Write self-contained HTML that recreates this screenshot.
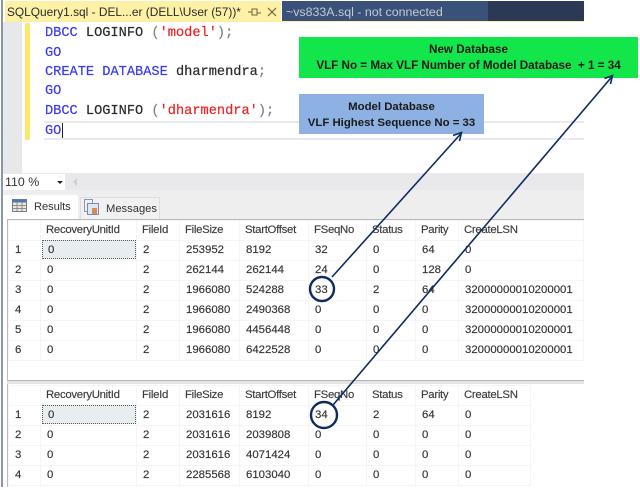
<!DOCTYPE html>
<html><head><meta charset="utf-8">
<style>
html,body{margin:0;padding:0;background:#fff;width:640px;height:490px;overflow:hidden}
#w{position:relative;width:640px;height:490px;overflow:hidden;filter:blur(.35px);font-family:"Liberation Sans",sans-serif}
.a{position:absolute}
.c{position:absolute;left:45px;font:13.65px/20px "Liberation Mono",monospace;color:#2a2a2a;white-space:pre;-webkit-text-stroke:.2px}
.k{color:#3a3af0}.s{color:#f02020}.g{color:#808080}
table{position:absolute;left:8px;border-collapse:collapse;table-layout:fixed;font-size:11.4px;color:#333;-webkit-text-stroke:.15px}
td{padding:0 0 0 6px;border:1px solid #f5f5f5;white-space:nowrap;overflow:hidden;box-sizing:border-box;height:20px;line-height:19px}
tr.h td{letter-spacing:-.3px;padding-left:5px;color:#3c3c3c}
.bx{position:absolute;text-align:center;font-weight:bold;line-height:16px;color:#1a1a1a;white-space:pre}
.sel{position:absolute;left:42px;width:94px;height:19px;box-sizing:border-box;border:1px dotted #555;background:#e8edf0;font-size:11.4px;line-height:18px;padding-left:5px;color:#333;-webkit-text-stroke:.15px}
</style></head><body><div id="w">

<!-- left strip -->
<div class="a" style="left:1px;top:0;width:2px;height:487px;background:#8c96aa"></div>
<div class="a" style="left:3px;top:22px;width:19px;height:151px;background:#e7e8ea"></div>
<div class="a" style="left:7px;top:219px;width:1px;height:268px;background:#b8b8b8"></div>

<!-- tab bar -->
<div class="a" style="left:5px;top:1px;width:276px;height:21px;background:#fdf1a6"></div>
<div class="a" style="left:7px;top:3px;font-size:11.9px;line-height:19px;color:#2a2a2a;white-space:pre">SQLQuery1.sql - DEL...er (DELL\User (57))*</div>
<svg class="a" style="left:245px;top:6px" width="32" height="12"><path d="M3 6h4M7 3v6h5V3zM12 7h4" fill="none" stroke="#6b6240" stroke-width="1"/><path d="M23 2l8 8M31 2l-8 8" stroke="#6b6240" stroke-width="1.2"/></svg>
<div class="a" style="left:282px;top:1px;width:206px;height:20px;background:#3a5279"></div>
<div class="a" style="left:488px;top:1px;width:96px;height:20px;background:#2b3957"></div>
<div class="a" style="left:286px;top:3px;font-size:12.4px;line-height:19px;color:#c3cad4;white-space:pre">~vs833A.sql - not connected</div>
<div class="a" style="left:5px;top:21px;width:579px;height:1px;background:#fbeea0"></div>

<!-- editor -->
<div class="a" style="left:25px;top:23px;width:5px;height:117px;background:#fbe769"></div>
<div class="a" style="left:44px;top:121px;width:540px;height:2px;background:#e9e9f3"></div>
<div class="a" style="left:44px;top:138px;width:540px;height:2px;background:#e9e9f3"></div>
<div class="c" style="top:24px"><span class="k">DBCC</span> LOGINFO <span class="g">(</span><span class="s">'model'</span><span class="g">);</span></div>
<div class="c" style="top:44px"><span class="k">GO</span></div>
<div class="c" style="top:63px"><span class="k">CREATE DATABASE</span> dharmendra<span class="g">;</span></div>
<div class="c" style="top:82px"><span class="k">GO</span></div>
<div class="c" style="top:102px"><span class="k">DBCC</span> LOGINFO <span class="g">(</span><span class="s">'dharmendra'</span><span class="g">);</span></div>
<div class="c" style="top:122px"><span class="k">GO</span></div>
<div class="a" style="left:62px;top:123px;width:1px;height:15px;background:#222"></div>

<!-- zoom bar + tabs -->
<div class="a" style="left:3px;top:173px;width:581px;height:17px;background:#e9e9eb"></div>
<div class="a" style="left:3px;top:190px;width:581px;height:29px;background:#eeeeef"></div>
<div class="a" style="left:3px;top:174px;width:62px;height:16px;background:#fff;font-size:12.4px;line-height:17px;color:#333;text-indent:2px">110 %</div>
<svg class="a" style="left:56px;top:180px" width="8" height="5"><path d="M1 1h6L4 4z" fill="#222"/></svg>
<svg class="a" style="left:71px;top:177px" width="7" height="10"><path d="M6 1L2 5l4 4z" fill="#cfd0d3"/></svg>
<div class="a" style="left:3px;top:195px;width:75px;height:24px;background:#fff"></div>
<div class="a" style="left:80px;top:197px;width:80px;height:22px;background:#f1f1f2;border:1px solid #dedede;border-bottom:0;box-sizing:border-box"></div>
<svg class="a" style="left:12px;top:199px" width="15" height="13"><rect x=".5" y=".5" width="14" height="12" fill="#f3e6cf" stroke="#6d7f9c"/><rect x=".5" y=".5" width="14" height="3" fill="#4f76b5"/><path d="M5 3v9M10 3v9M1 6.5h13M1 9.5h13" stroke="#8a8f9a"/></svg>
<svg class="a" style="left:84px;top:199px" width="16" height="17"><rect x=".5" y=".5" width="8" height="12" fill="#eef1f6" stroke="#8b97aa"/><rect x="3.5" y="4.5" width="11" height="11" fill="#dfe7f3" stroke="#7d8ca5"/><rect x="8" y="9" width="5" height="6" fill="#d98a5a"/></svg>
<div class="a" style="left:34px;top:199px;font-size:11.2px;line-height:16px;color:#333;letter-spacing:-.1px">Results</div>
<div class="a" style="left:106px;top:201px;font-size:11.2px;line-height:16px;color:#333">Messages</div>
<div class="a" style="left:7px;top:219px;width:577px;height:1px;background:#b9b9bb"></div>

<!-- table 1 -->
<table style="top:220px;width:575px">
<colgroup><col style="width:32px"><col style="width:96px"><col style="width:43px"><col style="width:60px"><col style="width:69px"><col style="width:58px"><col style="width:49px"><col style="width:43px"><col style="width:125px"></colgroup>
<tr class="h"><td></td><td>RecoveryUnitId</td><td>FileId</td><td>FileSize</td><td>StartOffset</td><td>FSeqNo</td><td>Status</td><td>Parity</td><td>CreateLSN</td></tr>
<tr><td>1</td><td></td><td>2</td><td>253952</td><td>8192</td><td>32</td><td>0</td><td>64</td><td>0</td></tr>
<tr><td>2</td><td>0</td><td>2</td><td>262144</td><td>262144</td><td>24</td><td>0</td><td>128</td><td>0</td></tr>
<tr><td>3</td><td>0</td><td>2</td><td>1966080</td><td>524288</td><td>33</td><td>2</td><td>64</td><td>32000000010200001</td></tr>
<tr><td>4</td><td>0</td><td>2</td><td>1966080</td><td>2490368</td><td>0</td><td>0</td><td>0</td><td>32000000010200001</td></tr>
<tr><td>5</td><td>0</td><td>2</td><td>1966080</td><td>4456448</td><td>0</td><td>0</td><td>0</td><td>32000000010200001</td></tr>
<tr><td>6</td><td>0</td><td>2</td><td>1966080</td><td>6422528</td><td>0</td><td>0</td><td>0</td><td>32000000010200001</td></tr>
</table>
<div class="sel" style="top:240px">0</div>

<!-- divider -->
<div class="a" style="left:7px;top:380px;width:577px;height:4px;background:#e4e4e4;border-top:1px solid #b5b5b5;box-sizing:border-box"></div>

<!-- table 2 -->
<table style="top:385px;width:522px">
<colgroup><col style="width:32px"><col style="width:96px"><col style="width:43px"><col style="width:60px"><col style="width:69px"><col style="width:58px"><col style="width:49px"><col style="width:43px"><col style="width:72px"></colgroup>
<tr class="h"><td></td><td>RecoveryUnitId</td><td>FileId</td><td>FileSize</td><td>StartOffset</td><td>FSeqNo</td><td>Status</td><td>Parity</td><td>CreateLSN</td></tr>
<tr><td>1</td><td></td><td>2</td><td>2031616</td><td>8192</td><td>34</td><td>2</td><td>64</td><td>0</td></tr>
<tr><td>2</td><td>0</td><td>2</td><td>2031616</td><td>2039808</td><td>0</td><td>0</td><td>0</td><td>0</td></tr>
<tr><td>3</td><td>0</td><td>2</td><td>2031616</td><td>4071424</td><td>0</td><td>0</td><td>0</td><td>0</td></tr>
<tr><td>4</td><td>0</td><td>2</td><td>2285568</td><td>6103040</td><td>0</td><td>0</td><td>0</td><td>0</td></tr>
</table>
<div class="sel" style="top:405px">0</div>

<!-- callouts -->
<div class="bx" style="left:299px;top:37px;width:339px;height:41px;background:#13e64b;padding-top:5px;box-sizing:border-box;font-size:11.65px">New Database
VLF No = Max VLF Number of Model Database  + 1 = 34</div>
<div class="bx" style="left:299px;top:94px;width:185px;height:40px;background:#8db1e2;padding-top:5px;box-sizing:border-box;font-size:11.4px">Model Database
VLF Highest Sequence No = 33</div>

<!-- arrows & circles -->
<svg class="a" style="left:0;top:0" width="640" height="490" fill="none" stroke="#0f2a63">
<circle cx="322" cy="289" r="12" stroke-width="2.4"/>
<circle cx="324" cy="415" r="13" stroke-width="2.4"/>
<path d="M332 277L461.5 133" stroke-width="1.6"/>
<path d="M453 135.5L461.5 132.5L459.5 141" stroke-width="1.6"/>
<path d="M333 405L612.5 76" stroke-width="1.6"/>
<path d="M604.5 78.5L612.5 75.5L610.5 84" stroke-width="1.6"/>
</svg>
</div></body></html>
